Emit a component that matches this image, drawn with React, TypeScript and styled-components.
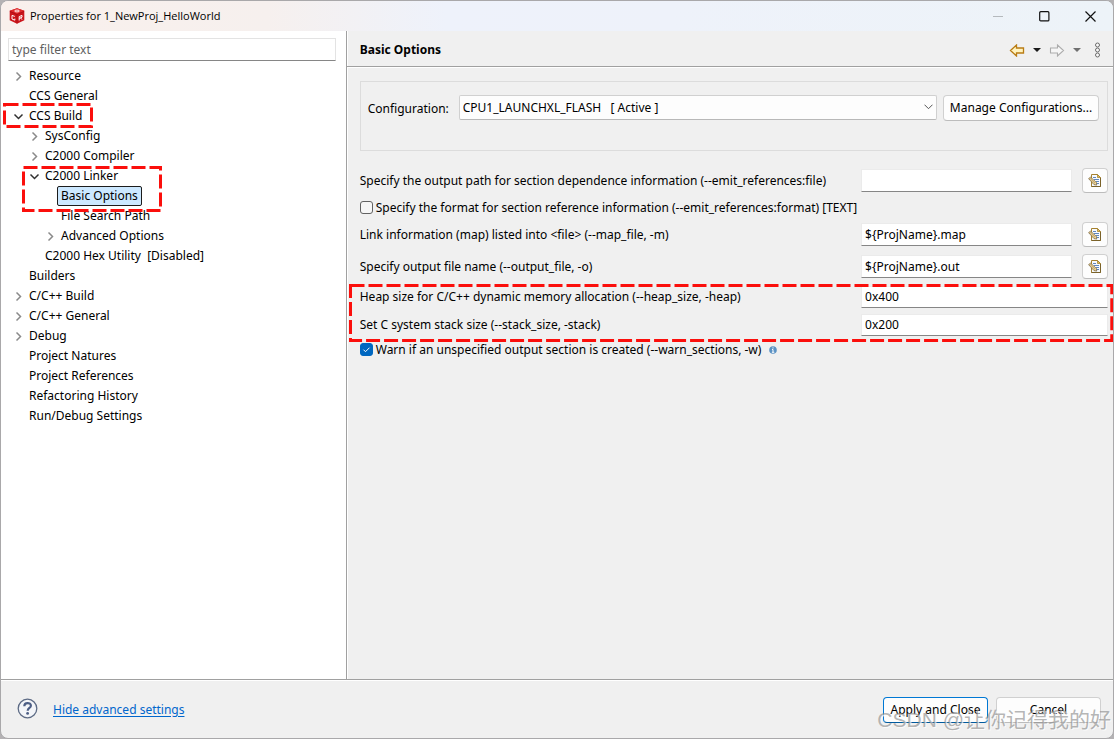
import React from "react";
import styled, { createGlobalStyle, css } from "styled-components";

const GlobalStyle = createGlobalStyle`
  * { box-sizing: border-box; }
  body {
    margin: 0;
    background: #b4b2b4;
    color: #000;
    font: 12px/20px "Noto Sans", "Noto Sans CJK SC", sans-serif;
  }
  button, input, select { font: inherit; color: inherit; }
`;

const Dialog = styled.div`
  position: relative;
  display: flex;
  flex-direction: column;
  min-height: 100vh;
  overflow: hidden;
  background: #f0f0f0;
  border: 1px solid #a9a8aa;
  border-radius: 8px;
`;

const TitleBar = styled.header`
  display: flex;
  align-items: center;
  height: 30px;
  padding-left: 8px;
  background: linear-gradient(90deg, #f9f0ec 0%, #f6f0ee 24%, #eef2fb 40%, #eef2fa 60%, #edf3f8 100%);
`;

const Title = styled.h1`
  flex: 1;
  margin: 0 0 0 5px;
  font-size: 11px;
  font-weight: 400;
  font-family: "Open Sans", sans-serif;
`;

const WindowButton = styled.button`
  display: grid;
  place-items: center;
  width: 46px;
  height: 30px;
  padding: 0;
  border: 0;
  background: none;
`;

const Body = styled.div`
  display: flex;
  flex: 1;
`;

const Sidebar = styled.nav`
  flex: 0 0 31%;
  min-width: 240px;
  padding: 7px 10px 0 7px;
  background: #fff;
`;

const FilterInput = styled.input`
  display: block;
  width: 100%;
  height: 23px;
  padding: 0 3px;
  border: 1px solid #e3e3e3;
  border-bottom-color: #868686;
  background: #fff;
  outline: 0;
  &::placeholder { color: #5f5f5f; opacity: 1; }
`;

const Tree = styled.ul`
  margin: 0;
  padding: 0;
  list-style: none;
`;

const RootTree = styled(Tree)`
  padding-top: 5px;
`;

const Branch = styled(Tree)`
  padding-left: 16px;
`;

const TreeItem = styled.li`
  position: relative;
`;

const TreeRow = styled.div`
  display: flex;
  align-items: center;
  height: 20px;
  white-space: pre;
`;

const Twisty = styled.span`
  display: grid;
  place-items: center;
  flex: none;
  width: 21px;
`;

const NodeLabel = styled.span<{ $selected?: boolean }>`
  ${(p) =>
    p.$selected &&
    css`
      height: 20px;
      margin: 0 -4px;
      padding: 0 3px;
      line-height: 18px;
      border: 1px solid #1c1c1c;
      border-radius: 2px;
      background: #cce8ff;
    `}
`;

const Main = styled.main`
  flex: 1;
  min-width: 0;
  border-left: 1px solid #a0a0a0;
  box-shadow: inset 1px 0 #fff;
`;

const PageHeader = styled.div`
  display: flex;
  align-items: center;
  height: 37px;
  padding: 2px 5px 0 13px;
  border-bottom: 1px solid #fff;
  box-shadow: inset 0 -1px #a0a0a0;
`;

const PageTitle = styled.h2`
  flex: 1;
  margin: 0;
  font-size: 12px;
  font-weight: 700;
`;

const Tool = styled.button<{ $wide?: boolean }>`
  display: grid;
  place-items: center;
  width: ${(p) => (p.$wide ? "22px" : "18px")};
  height: 22px;
  padding: 0;
  border: 0;
  background: none;
`;

const Content = styled.div`
  padding: 13px 5px 0 13px;
`;

const ConfigBox = styled.section`
  display: flex;
  align-items: flex-start;
  gap: 8px;
  height: 70px;
  margin-bottom: 17px;
  padding: 13px 8px 0 7px;
  border: 1px solid #dcdcdc;
`;

const ConfigLabel = styled.label`
  width: 83px;
  line-height: 27px;
  white-space: nowrap;
`;

const SelectWrap = styled.div`
  position: relative;
  flex: 1;
  min-width: 0;
`;

const Select = styled.select`
  display: block;
  width: 100%;
  height: 25px;
  padding: 0 24px 0 3px;
  appearance: none;
  border: 1px solid #d0d0d0;
  border-bottom-color: #b8b8b8;
  border-radius: 2px;
  background: #fdfdfd;
  white-space: pre;
`;

const SelectArrow = styled.svg`
  position: absolute;
  top: 9px;
  right: 4px;
  pointer-events: none;
`;

const Button = styled.button<{ $primary?: boolean }>`
  height: 26px;
  padding: 0 4px;
  white-space: nowrap;
  background: #fdfdfd;
  border: 1px solid ${(p) => (p.$primary ? "#0078d4" : "#d0d0d0")};
  border-bottom-color: ${(p) => (p.$primary ? "#005a9e" : "#bcbcbc")};
  border-radius: 4px;
`;

const ManageButton = styled(Button)`
  width: 156px;
  margin-left: -2px;
`;

const Form = styled.form`
  display: flex;
  flex-direction: column;
  gap: 6px;
`;

const Field = styled.div<{ $compact?: boolean }>`
  display: grid;
  grid-template-columns: 1fr 33%;
  align-items: start;
  height: ${(p) => (p.$compact ? "22px" : "26px")};
  line-height: ${(p) => (p.$compact ? "22px" : "26px")};
`;

const FieldControls = styled.div`
  display: flex;
  align-items: center;
  gap: 10px;
`;

const TextInput = styled.input<{ $compact?: boolean }>`
  flex: 1;
  min-width: 0;
  height: ${(p) => (p.$compact ? "22px" : "23px")};
  padding: 0 3px;
  border: 1px solid #ebebeb;
  border-bottom-color: #868686;
  background: #fff;
  outline: 0;
`;

const IconButton = styled.button`
  display: grid;
  place-items: center;
  width: 26px;
  height: 25px;
  padding: 0;
  background: #fdfdfd;
  border: 1px solid #d0d0d0;
  border-bottom-color: #bcbcbc;
  border-radius: 4px;
`;

const CheckRow = styled.div`
  display: flex;
  align-items: center;
  height: 16px;
`;

const CheckLabel = styled.label`
  display: flex;
  align-items: center;
  gap: 3px;
`;

const tick = encodeURIComponent(
  '<svg xmlns="http://www.w3.org/2000/svg" viewBox="0 0 13 13"><path d="M3.5 6.7l2 2 4-4" fill="none" stroke="#fff"/></svg>'
);

const Checkbox = styled.input`
  width: 13px;
  height: 13px;
  margin: 0 0 1px;
  appearance: none;
  border: 1px solid #626262;
  border-radius: 3px;
  background: #f6f6f6;
  &:checked {
    border-color: #0067c0;
    background: #0067c0 url("data:image/svg+xml,${tick}") center / 13px 13px;
  }
`;

const InfoIcon = styled.svg`
  margin-left: 8px;
`;

const FrameGroup = styled.div`
  position: relative;
  display: flex;
  flex-direction: column;
  gap: 6px;
`;

type FrameKind = "build" | "linker" | "memory";

const frameBox = {
  build: css`top: -3px; left: -5px; width: 90px; height: 25px;`,
  linker: css`top: 0; left: -2px; width: 140px; height: 46px;`,
  memory: css`top: -2px; left: -11px; width: calc(100% + 16px); height: 58px;`,
};

const FrameSvg = styled.svg<{ $kind: FrameKind }>`
  position: absolute;
  z-index: 1;
  overflow: hidden;
  pointer-events: none;
  ${(p) => frameBox[p.$kind]}
  rect {
    x: 1.5px;
    y: 1.5px;
    width: calc(100% - 3px);
    height: calc(100% - 3px);
    fill: none;
    stroke: #fb0f0c;
    stroke-width: 3px;
    stroke-dasharray: 14 4;
  }
`;

const Footer = styled.footer`
  display: flex;
  align-items: center;
  gap: 8px;
  height: 59px;
  padding: 2px 12px 0 16px;
  border-top: 1px solid #a0a0a0;
  box-shadow: inset 0 1px #fff;
`;

const HelpButton = styled.button`
  width: 21px;
  height: 21px;
  margin-bottom: 4px;
  padding: 0;
  border: 0;
  background: none;
`;

const SettingsLink = styled.a`
  margin: 0 auto 0 7px;
  color: #0066cc;
  text-underline-offset: 2px;
`;

const FooterButton = styled(Button)`
  width: 105px;
`;

const Signature = styled.div`
  position: absolute;
  right: 2px;
  bottom: 4px;
  color: rgba(140, 140, 140, 0.65);
  font: 21px/28px "Liberation Sans", "Noto Sans CJK SC", sans-serif;
  text-shadow: 1px 1px rgba(255, 255, 255, 0.7);
  white-space: nowrap;
  pointer-events: none;
`;

const Stamp = styled.div`
  position: absolute;
  left: -20px;
  top: 498px;
  color: rgba(0, 0, 0, 0.025);
  font: 20px/24px "Liberation Mono", "Noto Sans CJK SC", monospace;
  white-space: nowrap;
  transform: rotate(-30deg);
  pointer-events: none;
`;

function Frame({ kind }: { kind: FrameKind }) {
  return (
    <FrameSvg $kind={kind} aria-hidden>
      <rect />
    </FrameSvg>
  );
}

function Chevron({ open }: { open?: boolean }) {
  return (
    <svg width="11" height="11" viewBox="0 0 11 11" fill="none" strokeWidth="1.5" aria-hidden>
      {open ? <path d="M1.5 3.5l4 4 4-4" stroke="#303030" /> : <path d="M3.5 1.5l4 4-4 4" stroke="#8a8a8a" />}
    </svg>
  );
}

interface Node {
  label: string;
  expandable?: boolean;
  selected?: boolean;
  frame?: FrameKind;
  children?: Node[];
}

const nodes: Node[] = [
  { label: "Resource", expandable: true },
  { label: "CCS General" },
  {
    label: "CCS Build",
    expandable: true,
    frame: "build",
    children: [
      { label: "SysConfig", expandable: true },
      { label: "C2000 Compiler", expandable: true },
      {
        label: "C2000 Linker",
        expandable: true,
        frame: "linker",
        children: [
          { label: "Basic Options", selected: true },
          { label: "File Search Path" },
          { label: "Advanced Options", expandable: true },
        ],
      },
      { label: "C2000 Hex Utility  [Disabled]" },
    ],
  },
  { label: "Builders" },
  { label: "C/C++ Build", expandable: true },
  { label: "C/C++ General", expandable: true },
  { label: "Debug", expandable: true },
  { label: "Project Natures" },
  { label: "Project References" },
  { label: "Refactoring History" },
  { label: "Run/Debug Settings" },
];

function TreeNode({ node }: { node: Node }) {
  return (
    <TreeItem>
      <TreeRow>
        <Twisty>{node.expandable && <Chevron open={!!node.children} />}</Twisty>
        <NodeLabel $selected={node.selected}>{node.label}</NodeLabel>
      </TreeRow>
      {node.children && (
        <Branch>
          {node.children.map((c) => (
            <TreeNode key={c.label} node={c} />
          ))}
        </Branch>
      )}
      {node.frame && <Frame kind={node.frame} />}
    </TreeItem>
  );
}

function CubeIcon() {
  return (
    <svg width="16" height="16" viewBox="0 0 16 16" aria-hidden>
      <path d="M8 .3l7.3 2.5v9.4L8 15.8.7 12.2V2.8z" fill="#cc161c" />
      <path d="M8 .3l7.3 2.5L8 6 .7 2.8z" fill="#e02a2b" />
      <path d="M.9 3.4L8 6.6v8.8M8 6.6l7.1-3.2" stroke="#a80f15" strokeWidth=".8" fill="none" />
      <ellipse cx="8" cy="3" rx="2.4" ry=".9" fill="none" stroke="#fff" strokeWidth=".9" />
      <path d="M5.8 8.4L3 7.400v3.600l2.800 1.200v-1.600M10.200 12.500V8.600L13 7.400v1.800l-2.800 1.200M11.600 10l1.400 1.600" stroke="#fff" strokeWidth="1" fill="none" />
    </svg>
  );
}

function VariablesIcon() {
  return (
    <svg width="14" height="15" viewBox="0 0 14 15" aria-hidden>
      <path d="M3.500 1.500h6l3 3v9h-9z" fill="#f7fafe" stroke="#a5812f" />
      <path d="M12.500 5v8.500h-9" stroke="#7a622a" fill="none" />
      <path d="M9.500 1.500v3h3z" fill="#e8c35a" stroke="#a5812f" strokeWidth=".8" />
      <path d="M5 4.500h3M6 6.500h5M8 8.500h3M9 10.500h2" stroke="#5f86bd" />
      <path d="M.6 5.600l2-1.400 5.800 5.200.3 2.700-2.700-.5z" fill="#f0d595" stroke="#7b6a45" strokeWidth=".8" />
      <path d="M1.800 5.200l5.200 5" stroke="#a08a5c" strokeWidth=".7" />
    </svg>
  );
}

function ArrowIcon({ forward }: { forward?: boolean }) {
  return (
    <svg width="16" height="13" viewBox="0 0 16 13" aria-hidden>
      {forward ? (
        <path d="M1.500 4h7V1l6 5.500-6 5.500V9h-7z" fill="#f6f6f6" stroke="#acacac" strokeWidth="1.100" />
      ) : (
        <path d="M14.500 4h-7V1l-6 5.500 6 5.500V9h7z" fill="#fff3bf" stroke="#b97c14" strokeWidth="1.300" />
      )}
    </svg>
  );
}

function Caret({ color }: { color: string }) {
  return (
    <svg width="8" height="4" viewBox="0 0 8 4" aria-hidden>
      <path d="M0 0h8L4 4z" fill={color} />
    </svg>
  );
}

interface FieldProps {
  id: string;
  label: string;
  value: string;
  browse?: boolean;
}

function TextField({ id, label, value, browse }: FieldProps) {
  return (
    <Field $compact={!browse}>
      <label htmlFor={id}>{label}</label>
      <FieldControls>
        <TextInput id={id} type="text" defaultValue={value} $compact={!browse} />
        {browse && (
          <IconButton type="button" aria-label="Insert variable">
            <VariablesIcon />
          </IconButton>
        )}
      </FieldControls>
    </Field>
  );
}

export default function App() {
  return (
    <>
      <GlobalStyle />
      <Dialog>
        <TitleBar>
          <CubeIcon />
          <Title>Properties for 1_NewProj_HelloWorld</Title>
          <WindowButton aria-label="Minimize">
            <svg width="11" height="11" aria-hidden><path d="M0 5.500h10" stroke="#b5b9bd" /></svg>
          </WindowButton>
          <WindowButton aria-label="Maximize">
            <svg width="11" height="11" aria-hidden><rect x=".7" y=".7" width="9.200" height="9.200" rx="1" fill="none" stroke="#111" strokeWidth="1.200" /></svg>
          </WindowButton>
          <WindowButton aria-label="Close">
            <svg width="11" height="11" aria-hidden><path d="M.5.5l10 10M10.500.5l-10 10" stroke="#111" strokeWidth="1.200" /></svg>
          </WindowButton>
        </TitleBar>
        <Body>
          <Sidebar>
            <FilterInput type="text" placeholder="type filter text" aria-label="Filter" />
            <RootTree>
              {nodes.map((n) => (
                <TreeNode key={n.label} node={n} />
              ))}
            </RootTree>
          </Sidebar>
          <Main>
            <PageHeader>
              <PageTitle>Basic Options</PageTitle>
              <Tool $wide aria-label="Back"><ArrowIcon /></Tool>
              <Tool aria-label="Back history"><Caret color="#1a1a1a" /></Tool>
              <Tool $wide aria-label="Forward"><ArrowIcon forward /></Tool>
              <Tool aria-label="Forward history"><Caret color="#707070" /></Tool>
              <Tool $wide aria-label="View menu">
                <svg width="7" height="16" fill="#f8f8f8" stroke="#6b6b6b" aria-hidden>
                  <circle cx="3.500" cy="3" r="2" />
                  <circle cx="3.500" cy="8" r="2" />
                  <circle cx="3.500" cy="13" r="2" />
                </svg>
              </Tool>
            </PageHeader>
            <Content>
              <ConfigBox>
                <ConfigLabel htmlFor="configuration">Configuration:</ConfigLabel>
                <SelectWrap>
                  <Select id="configuration">
                    <option>{"CPU1_LAUNCHXL_FLASH\u00a0\u00a0 [ Active ]"}</option>
                  </Select>
                  <SelectArrow width="9" height="6" viewBox="0 0 9 6" aria-hidden>
                    <path d="M.5.7l4 4 4-4" fill="none" stroke="#555" />
                  </SelectArrow>
                </SelectWrap>
                <ManageButton type="button">Manage Configurations...</ManageButton>
              </ConfigBox>
              <Form>
                <TextField id="dep" label="Specify the output path for section dependence information (--emit_references:file)" value="" browse />
                <CheckRow>
                  <CheckLabel>
                    <Checkbox type="checkbox" />
                    Specify the format for section reference information (--emit_references:format) [TEXT]
                  </CheckLabel>
                </CheckRow>
                <TextField id="map" label="Link information (map) listed into <file> (--map_file, -m)" value="${ProjName}.map" browse />
                <TextField id="out" label="Specify output file name (--output_file, -o)" value="${ProjName}.out" browse />
                <FrameGroup>
                  <TextField id="heap" label="Heap size for C/C++ dynamic memory allocation (--heap_size, -heap)" value="0x400" />
                  <TextField id="stack" label="Set C system stack size (--stack_size, -stack)" value="0x200" />
                  <Frame kind="memory" />
                </FrameGroup>
                <CheckRow>
                  <CheckLabel>
                    <Checkbox type="checkbox" defaultChecked />
                    Warn if an unspecified output section is created (--warn_sections, -w)
                  </CheckLabel>
                  <InfoIcon width="8" height="8" viewBox="0 0 8 8" aria-hidden>
                    <circle cx="4" cy="4" r="3.800" fill="#5b92c4" />
                    <path d="M4 1.300v1.200M3 3.500h1v2.700M2.900 6.300h2.400" stroke="#fff" fill="none" />
                  </InfoIcon>
                </CheckRow>
              </Form>
            </Content>
          </Main>
        </Body>
        <Footer>
          <HelpButton aria-label="Help">
            <svg width="21" height="21" viewBox="0 0 21 21" fill="none" aria-hidden>
              <circle cx="10.500" cy="10.500" r="9.300" fill="#f3f5f9" stroke="#5d6b85" strokeWidth="1.300" />
              <path d="M7.300 8.200c0-4.200 6.600-4 6.600-.5 0 2.300-3.200 2.300-3.200 5" stroke="#4d5f86" strokeWidth="2.200" />
              <circle cx="10.600" cy="15.400" r="1.400" fill="#4d5f86" />
            </svg>
          </HelpButton>
          <SettingsLink href="#advanced">Hide advanced settings</SettingsLink>
          <FooterButton type="button" $primary>Apply and Close</FooterButton>
          <FooterButton type="button">Cancel</FooterButton>
        </Footer>
        <Stamp aria-hidden>2025-01-23 14:04 信天翁半导体有限公司</Stamp>
        <Signature>CSDN @让你记得我的好</Signature>
      </Dialog>
    </>
  );
}
